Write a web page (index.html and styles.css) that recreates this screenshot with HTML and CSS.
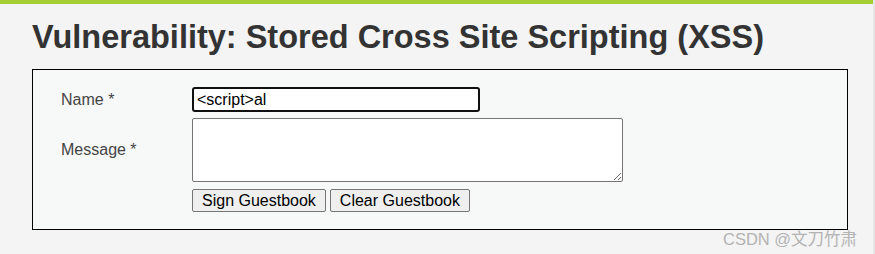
FILE: index.html
```html
<!DOCTYPE html>
<html>
<head>
<meta charset="utf-8">
<link rel="stylesheet" href="styles.css">
</head>
<body>
<div class="page">
  <div class="body-padded">
    <h1 class="title">Vulnerability: Stored Cross Site Scripting (XSS)</h1>
    <div class="code-area">
      <form class="guest-form">
        <div class="row row-name">
          <label class="label" for="txtName">Name *</label>
          <input class="name-input" id="txtName" type="text" value="&lt;script&gt;al">
        </div>
        <div class="row row-msg">
          <label class="label" for="mtxMessage">Message *</label>
          <textarea class="msg-input" id="mtxMessage"></textarea>
        </div>
        <div class="row row-btns">
          <span class="label"></span>
          <div class="btns">
            <button type="button" class="btn">Sign Guestbook</button>
            <button type="button" class="btn">Clear Guestbook</button>
          </div>
        </div>
      </form>
    </div>
  </div>
</div>
<div class="watermark">CSDN @文刀竹肃</div>
</body>
</html>
```
FILE: styles.css
```css
html, body {
  margin: 0;
  padding: 0;
  height: 100%;
}
body {
  background: #f4f4f4;
  font-family: "Liberation Sans", Arial, sans-serif;
  overflow: hidden;
  border-right: 2px solid #e6e6e6;
  box-sizing: border-box;
}
.page {
  border-top: 4px solid #a4cf32;
}
.body-padded {
  padding: 0 25px 0 32px;
}
.title {
  margin: 0;
  padding-top: 14px;
  height: 50px;
  box-sizing: border-box;
  font-size: 32.5px;
  font-weight: bold;
  color: #333;
  line-height: 38px;
  white-space: nowrap;
}
.code-area {
  margin-top: 15px;
  border: 1px solid #000;
  background: #f7f8f8;
  height: 161px;
  box-sizing: border-box;
  padding: 17px 0 0 28px;
}
.guest-form {
  display: flex;
  flex-direction: column;
}
.row {
  display: flex;
  align-items: center;
}
.label {
  width: 131px;
  font-size: 16px;
  color: #444;
}
.name-input {
  width: 288px;
  height: 25px;
  box-sizing: border-box;
  border: 2px solid #101010;
  border-radius: 3px;
  padding: 0 3px;
  margin: 0;
  font-family: "Liberation Sans", Arial, sans-serif;
  font-size: 16px;
  color: #000;
  background: #fff;
  outline: none;
}
.row-msg {
  margin-top: 6px;
}
.msg-input {
  width: 431px;
  height: 64px;
  box-sizing: border-box;
  border: 1px solid #767676;
  border-radius: 2px;
  margin: 0;
  background: #fff;
  resize: both;
}
.row-btns {
  margin-top: 7px;
}
.btns {
  display: flex;
  gap: 4px;
}
.btn {
  height: 23px;
  box-sizing: border-box;
  padding: 0 9px;
  border: 1px solid #767676;
  border-radius: 2px;
  background: #efefef;
  font-family: "Liberation Sans", Arial, sans-serif;
  font-size: 16px;
  line-height: 20px;
  color: #000;
  margin: 0;
}
.watermark {
  position: absolute;
  left: 723px;
  top: 226px;
  font-family: "Liberation Sans", "Noto Sans CJK SC", sans-serif;
  font-size: 16.5px;
  color: #b3b3b3;
}
```
